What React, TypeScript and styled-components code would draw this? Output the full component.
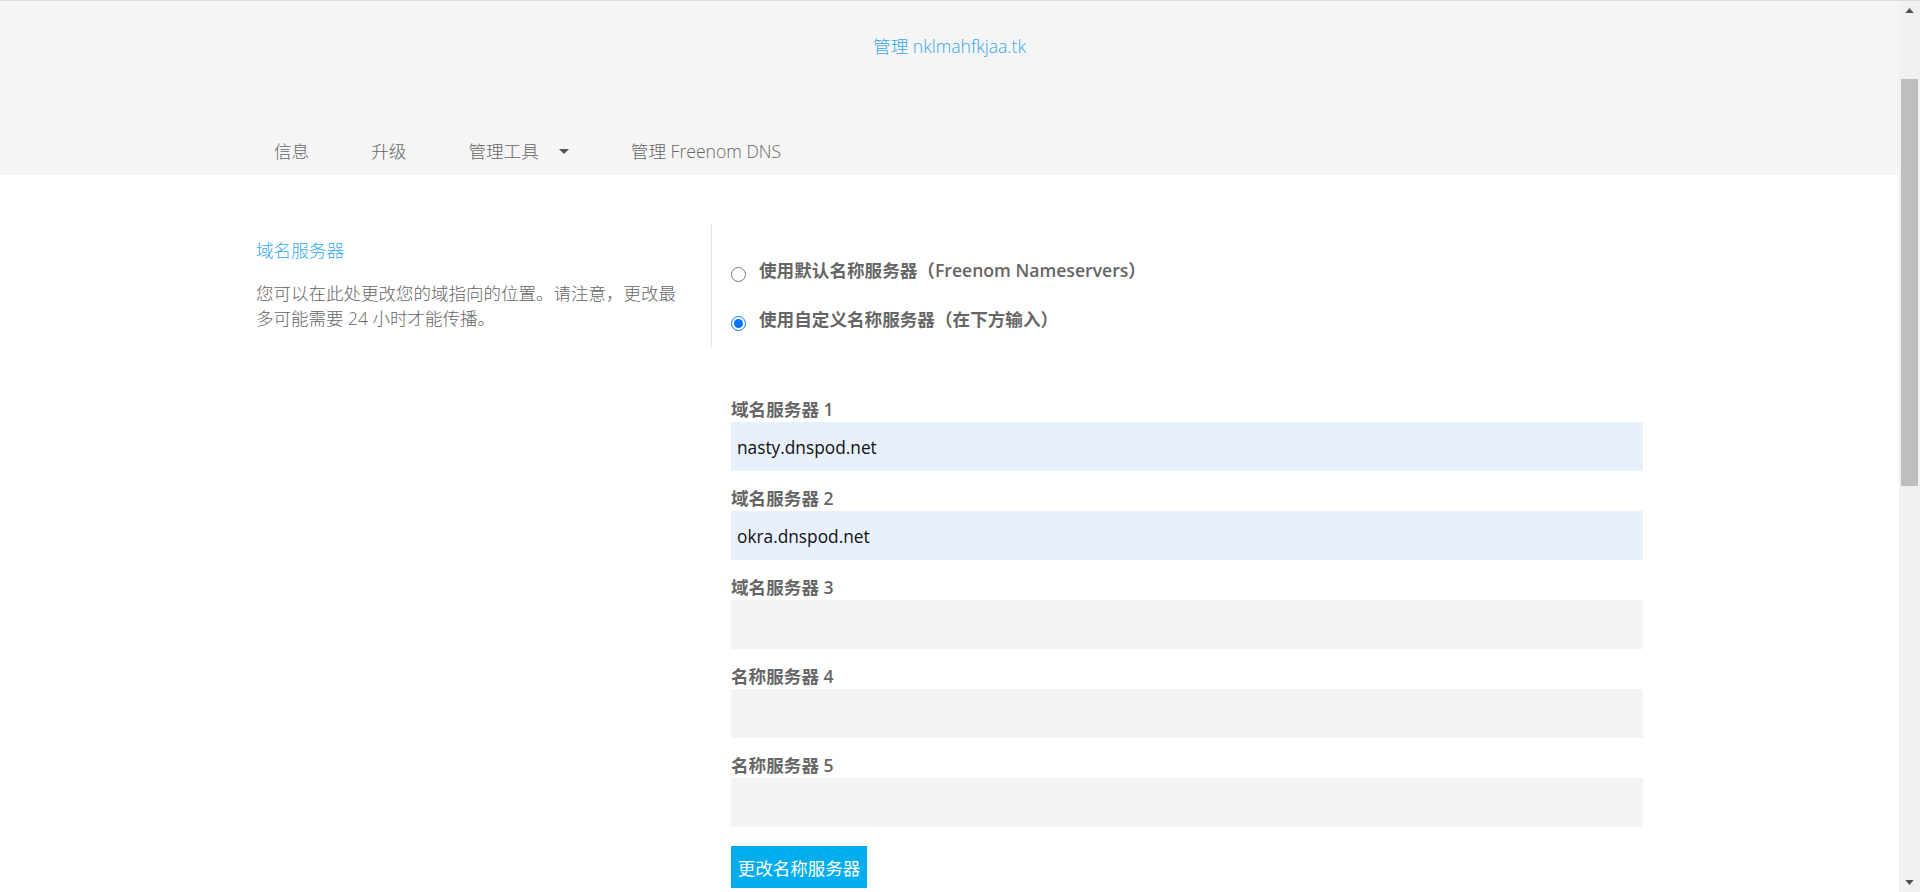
import React from 'react'
import styled, { createGlobalStyle } from 'styled-components'

const FONT = `"Open Sans", "Noto Sans CJK SC", sans-serif`

const GlobalStyle = createGlobalStyle`
  html, body {
    margin: 0;
    padding: 0;
    background: #fff;
    overflow: hidden;
  }
  * {
    box-sizing: border-box;
  }
`

const nameservers = [
  { label: '域名服务器 1', value: 'nasty.dnspod.net' },
  { label: '域名服务器 2', value: 'okra.dnspod.net' },
  { label: '域名服务器 3', value: '' },
  { label: '名称服务器 4', value: '' },
  { label: '名称服务器 5', value: '' },
]

const App = () => {
  return (
    <Page>
      <GlobalStyle />
      <Main>
        <Header>
          <Title>管理 nklmahfkjaa.tk</Title>
          <Nav>
            <NavItem>信息</NavItem>
            <NavItem>升级</NavItem>
            <NavItem>
              管理工具
              <Caret />
            </NavItem>
            <NavItem>管理 Freenom DNS</NavItem>
          </Nav>
        </Header>
        <Body>
          <Sidebar>
            <SideTitle>域名服务器</SideTitle>
            <SideText>您可以在此处更改您的域指向的位置。请注意，更改最多可能需要 24 小时才能传播。</SideText>
          </Sidebar>
          <Form>
            <RadioGroup>
              <RadioRow>
                <Radio type="radio" name="ns" />
                使用默认名称服务器（Freenom Nameservers）
              </RadioRow>
              <RadioRow>
                <Radio type="radio" name="ns" defaultChecked />
                使用自定义名称服务器（在下方输入）
              </RadioRow>
            </RadioGroup>
            <Fields>
              {nameservers.map((ns) => (
                <Field key={ns.label}>
                  <FieldLabel>{ns.label}</FieldLabel>
                  <FieldInput filled={ns.value !== ''} defaultValue={ns.value} />
                </Field>
              ))}
            </Fields>
            <SubmitButton type="button">更改名称服务器</SubmitButton>
          </Form>
        </Body>
      </Main>
      <ScrollTrack>
        <ScrollArrow viewBox="0 0 10 6">
          <path d="M5 0 L10 6 L0 6 Z" />
        </ScrollArrow>
        <ScrollThumb />
        <ScrollArrow viewBox="0 0 10 6">
          <path d="M0 0 L10 0 L5 6 Z" />
        </ScrollArrow>
      </ScrollTrack>
    </Page>
  )
}

const Page = styled.div`
  display: flex;
  height: 892px;
  overflow: hidden;
  border-top: 1px solid #ddd;
  font-family: ${FONT};
  font-size: 17.6px;
`

const Main = styled.div`
  flex: 1;
  min-width: 0;
`

const Header = styled.div`
  display: flex;
  flex-direction: column;
  justify-content: space-between;
  height: 174px;
  padding: 33px 0 12px;
  background: #f5f5f5;
`

const Title = styled.div`
  text-align: center;
  font-weight: 300;
  line-height: 24px;
  color: #35a8f0;
`

const Nav = styled.div`
  display: flex;
  gap: 62px;
  padding-left: 274px;
`

const NavItem = styled.div`
  display: flex;
  align-items: center;
  font-weight: 300;
  line-height: 24px;
  color: #666;
`

const Caret = styled.span`
  margin-left: 20px;
  border-left: 5px solid transparent;
  border-right: 5px solid transparent;
  border-top: 5px solid #555;
`

const Body = styled.div`
  display: flex;
  padding: 49px 0 0 256px;
`

const Sidebar = styled.div`
  width: 456px;
  height: 123px;
  padding: 13px 30px 0 0;
  border-right: 1px solid #e8e8e8;
`

const SideTitle = styled.div`
  font-weight: 300;
  line-height: 26px;
  color: #35a8f0;
`

const SideText = styled.div`
  margin-top: 18px;
  font-size: 17.5px;
  font-weight: 300;
  line-height: 25px;
  color: #666;
`

const Form = styled.div`
  width: 931px;
  padding-left: 19px;
`

const RadioGroup = styled.div`
  display: flex;
  flex-direction: column;
  gap: 23px;
  padding-top: 33px;
  height: 172px;
`

const RadioRow = styled.label`
  display: flex;
  align-items: center;
  font-weight: 600;
  line-height: 26px;
  color: #666;
`

const Radio = styled.input`
  width: 15px;
  height: 15px;
  margin: 9px 13px 0 0;
`

const Fields = styled.div`
  display: flex;
  flex-direction: column;
  gap: 14px;
`

const Field = styled.div`
  display: flex;
  flex-direction: column;
`

const FieldLabel = styled.label`
  font-weight: 600;
  line-height: 26px;
  color: #666;
`

const FieldInput = styled.input<{ filled: boolean }>`
  height: 49px;
  padding: 2px 6px 0;
  border: 0;
  border-radius: 0;
  outline: 0;
  font-family: ${FONT};
  font-size: 17.3px;
  color: #111;
  background: ${(props) => (props.filled ? '#e8f0fe' : '#f3f3f3')};
`

const SubmitButton = styled.button`
  display: block;
  width: 136px;
  height: 42px;
  margin-top: 19px;
  padding: 0;
  border: 0;
  font-family: ${FONT};
  font-size: 17.5px;
  color: #fff;
  background: #00aeef;
`

const ScrollTrack = styled.div`
  display: flex;
  flex-direction: column;
  align-items: center;
  flex: 0 0 21px;
  background: #f1f1f1;
`

const ScrollArrow = styled.svg`
  flex: 0 0 5px;
  width: 9px;
  height: 5px;
  margin: 7px 0;
  fill: #505050;
`

const ScrollThumb = styled.div`
  flex: 0 0 407px;
  align-self: stretch;
  margin: 59px 2px auto;
  background: #bebebe;
`

export default App
